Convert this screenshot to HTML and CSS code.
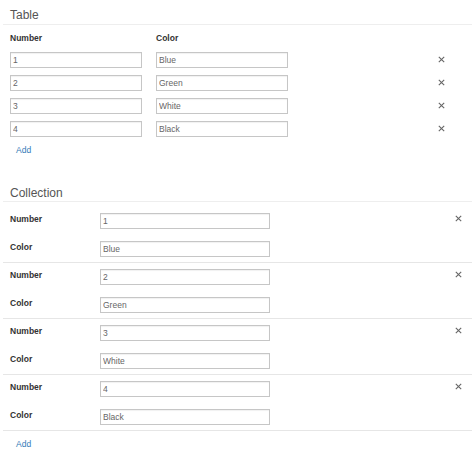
FILE: index.html
```html
<!DOCTYPE html>
<html>
<head>
<meta charset="utf-8">
<link rel="stylesheet" href="styles.css">
</head>
<body>
<div class="page">
  <section class="table-section">
    <h2 class="section-title">Table</h2>
    <div class="table-grid">
      <div class="col-head">Number</div>
      <div class="col-head">Color</div>
      <div></div>

      <input class="field" value="1"><input class="field" value="Blue"><span class="remove table-remove"><svg width="7" height="7" viewBox="0 0 7 7"><path d="M0.8 0.8L6.2 6.2M6.2 0.8L0.8 6.2"/></svg></span>
      <input class="field" value="2"><input class="field" value="Green"><span class="remove table-remove"><svg width="7" height="7" viewBox="0 0 7 7"><path d="M0.8 0.8L6.2 6.2M6.2 0.8L0.8 6.2"/></svg></span>
      <input class="field" value="3"><input class="field" value="White"><span class="remove table-remove"><svg width="7" height="7" viewBox="0 0 7 7"><path d="M0.8 0.8L6.2 6.2M6.2 0.8L0.8 6.2"/></svg></span>
      <input class="field" value="4"><input class="field" value="Black"><span class="remove table-remove"><svg width="7" height="7" viewBox="0 0 7 7"><path d="M0.8 0.8L6.2 6.2M6.2 0.8L0.8 6.2"/></svg></span>
    </div>
    <a class="add" href="#">Add</a>
  </section>

  <section class="collection-section">
    <h2 class="section-title">Collection</h2>
    <div class="collection">
      <div class="item">
        <div class="label">Number</div><input class="field" value="1"><span class="remove item-remove"><svg width="7" height="7" viewBox="0 0 7 7"><path d="M0.8 0.8L6.2 6.2M6.2 0.8L0.8 6.2"/></svg></span>
        <div class="label">Color</div><input class="field" value="Blue">
      </div>
      <div class="item">
        <div class="label">Number</div><input class="field" value="2"><span class="remove item-remove"><svg width="7" height="7" viewBox="0 0 7 7"><path d="M0.8 0.8L6.2 6.2M6.2 0.8L0.8 6.2"/></svg></span>
        <div class="label">Color</div><input class="field" value="Green">
      </div>
      <div class="item">
        <div class="label">Number</div><input class="field" value="3"><span class="remove item-remove"><svg width="7" height="7" viewBox="0 0 7 7"><path d="M0.8 0.8L6.2 6.2M6.2 0.8L0.8 6.2"/></svg></span>
        <div class="label">Color</div><input class="field" value="White">
      </div>
      <div class="item">
        <div class="label">Number</div><input class="field" value="4"><span class="remove item-remove"><svg width="7" height="7" viewBox="0 0 7 7"><path d="M0.8 0.8L6.2 6.2M6.2 0.8L0.8 6.2"/></svg></span>
        <div class="label">Color</div><input class="field" value="Black">
      </div>
    </div>
    <a class="add" href="#">Add</a>
  </section>
</div>
</body>
</html>
```

FILE: styles.css
```css
html, body {
  margin: 0;
  padding: 0;
  background: #fff;
}

body {
  font-family: "Liberation Sans", Arial, sans-serif;
  color: #333;
}

.page {
  margin: 0 2px 0 3px;
}

.section-title {
  margin: 0;
  padding: 7px 7px 0;
  font-size: 12px;
  font-weight: normal;
  line-height: 17px;
  color: #555;
  border-bottom: 1px solid #eee;
}

.collection-section {
  margin-top: 21px;
}

.collection-section .section-title {
  padding-top: 9px;
  line-height: 15px;
}

.table-grid {
  display: grid;
  grid-template-columns: 132px 132px 1fr;
  column-gap: 14px;
  row-gap: 7px;
  padding: 0 7px;
  margin-top: 7px;
  align-items: center;
}

.col-head {
  font-size: 8.5px;
  font-weight: bold;
  line-height: 12px;
  margin-bottom: 1px;
}

.field {
  box-sizing: border-box;
  height: 16px;
  width: 100%;
  margin: 0;
  padding: 0 2px;
  border: 1px solid #c6c6c6;
  border-radius: 0;
  box-shadow: inset 0 1px 1px rgba(0, 0, 0, 0.06);
  font-family: "Liberation Sans", Arial, sans-serif;
  font-size: 8.5px;
  color: #666;
  background: #fff;
  outline: none;
}

.remove {
  display: flex;
  width: 7px;
  height: 7px;
}

.remove svg {
  display: block;
}

.remove path {
  stroke: #666;
  stroke-width: 1.1;
  fill: none;
}

.table-remove {
  justify-self: start;
  margin-left: 136px;
  margin-top: -1px;
}

.add {
  display: block;
  margin: 7px 0 0 13px;
  font-size: 8.5px;
  line-height: 12px;
  color: #337ab7;
  text-decoration: none;
}

.collection {
  margin-top: 5px;
}

.item {
  display: grid;
  grid-template-columns: 90px 170px 1fr;
  row-gap: 12px;
  padding: 6px 7px 5px;
  border-bottom: 1px solid #e6e6e6;
  align-items: start;
}

.label {
  font-size: 8.5px;
  font-weight: bold;
  line-height: 12px;
}

.item-remove {
  justify-self: end;
  margin-right: 3px;
  margin-top: 2px;
}

.collection-section .add {
  margin-top: 7px;
}
```
